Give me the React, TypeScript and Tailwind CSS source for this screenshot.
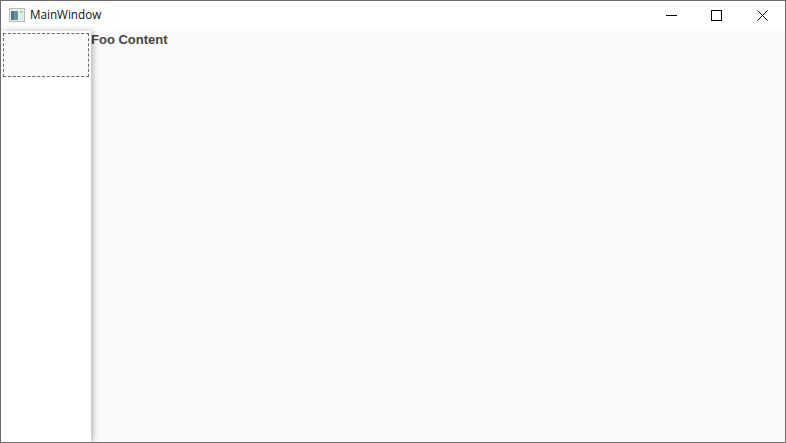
export default function App() {
  return (
    <div className="flex h-[443px] w-[786px] flex-col overflow-hidden border border-[#6d6d6d] bg-white font-['Liberation_Sans',sans-serif]">
      {/* Title bar */}
      <div className="flex h-[30px] shrink-0 items-center bg-white pb-0.5">
        <div className="ml-2 flex h-[15px] w-4 items-center justify-center">
          <svg width="16" height="15" viewBox="0 0 16 15">
            <rect x="0.5" y="0.5" width="15" height="13" fill="#eceeee" stroke="#b9b9b9" />
            <rect x="2" y="3" width="7" height="9" fill="#5c9a94" />
            <rect x="2" y="3" width="3" height="9" fill="#4a7598" />
            <rect x="11" y="3" width="3" height="2" fill="#a5d4b8" />
            <rect x="11" y="6" width="3" height="6" fill="#dfe8e8" />
          </svg>
        </div>
        <span className="ml-[5px] font-['Open_Sans',sans-serif] text-[11.7px] text-[#111]">MainWindow</span>
        <div className="ml-auto flex h-full">
          <button className="flex h-full w-[45px] items-center justify-center">
            <svg width="11" height="11" viewBox="0 0 11 11">
              <path d="M0 5.5H11" stroke="#000" strokeWidth="1" />
            </svg>
          </button>
          <button className="mr-px flex h-full w-[45px] items-center justify-center">
            <svg width="11" height="11" viewBox="0 0 11 11">
              <rect x="0.5" y="0.5" width="10" height="10" fill="none" stroke="#000" />
            </svg>
          </button>
          <button className="flex h-full w-[45px] items-center justify-center">
            <svg width="11" height="11" viewBox="0 0 11 11">
              <path d="M0.5 0.5L10.5 10.5M10.5 0.5L0.5 10.5" stroke="#000" strokeWidth="1" />
            </svg>
          </button>
        </div>
      </div>

      {/* Body */}
      <div className="flex min-h-0 flex-1 bg-[#fafafa]">
        <div className="z-10 w-[90px] shrink-0 bg-white px-0.5 pt-0.5 shadow-[2px_0_6px_rgba(0,0,0,0.28)]">
          <div className="h-11 w-[86px] border border-dashed border-[#666] bg-[#fafafa]" />
        </div>
        <div className="flex-1 text-[13px] font-bold leading-[18px] text-[#444]">Foo Content</div>
      </div>
    </div>
  );
}
